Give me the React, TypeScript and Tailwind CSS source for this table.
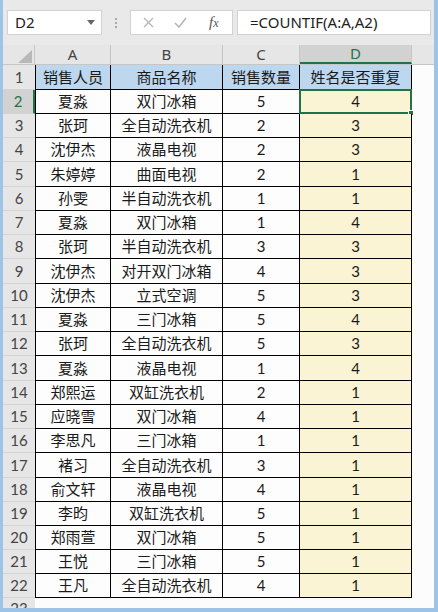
import React from "react";

const data: [string, string, string, string][] = [
  ["销售人员", "商品名称", "销售数量", "姓名是否重复"],
  ["夏淼", "双门冰箱", "5", "4"],
  ["张珂", "全自动洗衣机", "2", "3"],
  ["沈伊杰", "液晶电视", "2", "3"],
  ["朱婷婷", "曲面电视", "2", "1"],
  ["孙雯", "半自动洗衣机", "1", "1"],
  ["夏淼", "双门冰箱", "1", "4"],
  ["张珂", "半自动洗衣机", "3", "3"],
  ["沈伊杰", "对开双门冰箱", "4", "3"],
  ["沈伊杰", "立式空调", "5", "3"],
  ["夏淼", "三门冰箱", "5", "4"],
  ["张珂", "全自动洗衣机", "5", "3"],
  ["夏淼", "液晶电视", "1", "4"],
  ["郑熙运", "双缸洗衣机", "2", "1"],
  ["应晓雪", "双门冰箱", "4", "1"],
  ["李思凡", "三门冰箱", "1", "1"],
  ["褚习", "全自动洗衣机", "3", "1"],
  ["俞文轩", "液晶电视", "4", "1"],
  ["李昀", "双缸洗衣机", "5", "1"],
  ["郑雨萱", "双门冰箱", "5", "1"],
  ["王悦", "三门冰箱", "5", "1"],
  ["王凡", "全自动洗衣机", "4", "1"],
];

const tallRows = [1, 5, 9, 13, 17];

function Row({ idx, cells }: { idx: number; cells: [string, string, string, string] }) {
  const tall = tallRows.includes(idx);
  const header = idx === 1;
  const selected = idx === 2;
  const cellBase = "flex items-center justify-center border-b border-r border-black shrink-0";
  const fill = header ? "bg-[#bdd7ee]" : "bg-[#fdfdfd]";
  return (
    <div className={`flex shrink-0 ${tall ? "h-[25px]" : "h-[24px]"}`}>
      <div
        className={`w-[32px] shrink-0 flex items-center justify-center border-b border-[#d4d4d4] ${
          selected
            ? "bg-[#d2d2d2] text-[#217346] border-r-2 border-r-[#217346]"
            : "bg-[#e6e6e6] text-[#444]"
        }`}
      >
        {idx}
      </div>
      <div className={`${cellBase} ${fill} w-[76px] border-l`}>{cells[0]}</div>
      <div className={`${cellBase} ${fill} w-[112px]`}>{cells[1]}</div>
      <div className={`${cellBase} ${fill} w-[77px]`}>{cells[2]}</div>
      <div className={`${cellBase} ${header ? "bg-[#bdd7ee]" : "bg-[#fbf4d4]"} w-[112px] relative`}>
        {cells[3]}
        {selected && (
          <div className="absolute left-[-1px] top-[-1px] w-[113px] h-[25px] border-2 border-[#217346]">
            <div className="absolute right-[-4px] bottom-[-4px] w-[6px] h-[6px] bg-[#217346] border border-white" />
          </div>
        )}
      </div>
      <div className="flex-1 bg-[#fcfcfc]" />
    </div>
  );
}

export default function App() {
  return (
    <div className="w-[438px] h-[612px] bg-[#9dc3e6] pl-[3px] pr-[4px] pb-[4px] overflow-hidden font-['Lato','Noto_Sans_CJK_SC',sans-serif] text-[15px] text-[#1a1a1a]">
      <div className="h-full bg-white flex flex-col overflow-hidden">
        {/* formula bar */}
        <div className="h-[45px] shrink-0 bg-[#e9e9e9] flex items-start pt-[10px] pl-[4px] pr-[3px]">
          <div className="w-[95px] h-[25px] bg-white border border-[#d2d2d2] flex items-center justify-between pl-[7px] pr-[6px] font-['Noto_Sans',sans-serif] text-[15px] text-[#222]">
            <span>D2</span>
            <svg width="8" height="5" viewBox="0 0 8 5">
              <path d="M0 0 L8 0 L4 5 Z" fill="#666" />
            </svg>
          </div>
          <div className="w-[28px] h-[25px] flex flex-col items-center justify-center gap-[2px]">
            <div className="w-[2px] h-[2px] bg-[#a8a8a8]" />
            <div className="w-[2px] h-[2px] bg-[#a8a8a8]" />
            <div className="w-[2px] h-[2px] bg-[#a8a8a8]" />
          </div>
          <div className="w-[103px] h-[25px] bg-white border border-[#d2d2d2] flex items-center pl-[12px]">
            <svg width="11" height="11" viewBox="0 0 11 11">
              <path d="M1 1 L10 10 M10 1 L1 10" stroke="#b4b4b4" strokeWidth="1.3" fill="none" />
            </svg>
            <svg className="ml-[20px]" width="13" height="11" viewBox="0 0 13 11">
              <path d="M1 6 L5 10 L12 1" stroke="#b4b4b4" strokeWidth="1.5" fill="none" />
            </svg>
            <span className="ml-[22px] font-['Liberation_Serif',serif] italic text-[15px] text-[#555] leading-none">
              f<span className="text-[12px]">x</span>
            </span>
          </div>
          <div className="flex-1 ml-[4px] h-[25px] bg-white border border-[#d2d2d2] flex items-center pl-[12px] font-['Noto_Sans',sans-serif] text-[15px] text-[#222]">
            =COUNTIF(A:A,A2)
          </div>
        </div>
        {/* column headers */}
        <div className="h-[20px] shrink-0 flex bg-[#e6e6e6] border-b border-[#c6c6c6] text-[#444] font-['Noto_Sans',sans-serif]">
          <div className="w-[32px] shrink-0 border-r border-[#c6c6c6] flex items-end justify-end pr-[2px] pb-[1px]">
            <svg width="14" height="13" viewBox="0 0 14 13">
              <path d="M14 0 L14 13 L0 13 Z" fill="#b8b8b8" />
            </svg>
          </div>
          <div className="w-[76px] shrink-0 border-r border-[#c6c6c6] flex items-center justify-center">A</div>
          <div className="w-[112px] shrink-0 border-r border-[#c6c6c6] flex items-center justify-center">B</div>
          <div className="w-[77px] shrink-0 border-r border-[#c6c6c6] flex items-center justify-center">C</div>
          <div className="w-[112px] shrink-0 border-r border-[#c6c6c6] bg-[#d2d2d2] text-[#217346] border-b-2 border-b-[#217346] flex items-center justify-center">
            D
          </div>
          <div className="flex-1" />
        </div>
        {data.map((cells, i) => (
          <Row key={i} idx={i + 1} cells={cells} />
        ))}
        <div className="flex shrink-0 h-[24px]">
          <div className="w-[32px] shrink-0 flex items-start justify-center bg-[#e6e6e6] text-[#444] leading-[20px]">23</div>
          <div className="flex-1 bg-[#fcfcfc]" />
        </div>
      </div>
    </div>
  );
}
